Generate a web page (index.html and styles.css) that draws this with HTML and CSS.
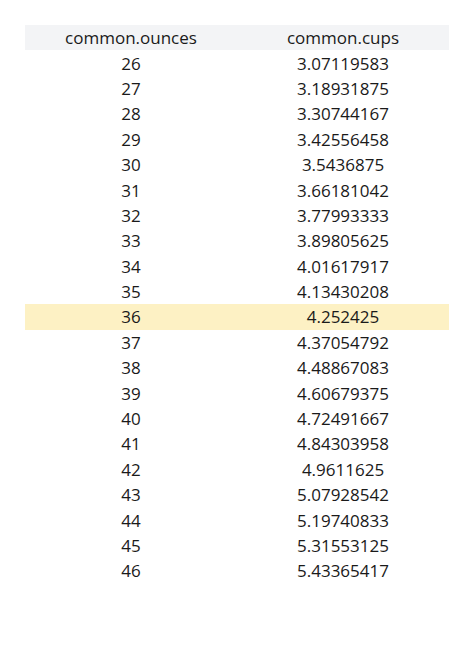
FILE: index.html
```html
<!DOCTYPE html>
<html>
<head>
<meta charset="utf-8">
<link rel="stylesheet" href="styles.css">
</head>
<body>
<table class="data">
<thead><tr><th>common.ounces</th><th>common.cups</th></tr></thead>
<tbody>
<tr><td>26</td><td>3.07119583</td></tr>
<tr><td>27</td><td>3.18931875</td></tr>
<tr><td>28</td><td>3.30744167</td></tr>
<tr><td>29</td><td>3.42556458</td></tr>
<tr><td>30</td><td>3.5436875</td></tr>
<tr><td>31</td><td>3.66181042</td></tr>
<tr><td>32</td><td>3.77993333</td></tr>
<tr><td>33</td><td>3.89805625</td></tr>
<tr><td>34</td><td>4.01617917</td></tr>
<tr><td>35</td><td>4.13430208</td></tr>
<tr class="hl"><td>36</td><td>4.252425</td></tr>
<tr><td>37</td><td>4.37054792</td></tr>
<tr><td>38</td><td>4.48867083</td></tr>
<tr><td>39</td><td>4.60679375</td></tr>
<tr><td>40</td><td>4.72491667</td></tr>
<tr><td>41</td><td>4.84303958</td></tr>
<tr><td>42</td><td>4.9611625</td></tr>
<tr><td>43</td><td>5.07928542</td></tr>
<tr><td>44</td><td>5.19740833</td></tr>
<tr><td>45</td><td>5.31553125</td></tr>
<tr><td>46</td><td>5.43365417</td></tr>
</tbody>
</table>
</body>
</html>
```
FILE: styles.css
```css
html, body { margin: 0; padding: 0; background: #fff; }
body { padding: 25px 25px 0 25px; font-family: "Open Sans", "Noto Sans", sans-serif; color: #1a1a1a; }
.data { width: 424px; border-collapse: collapse; table-layout: fixed; font-size: 17px; }
.data th, .data td { width: 50%; text-align: center; font-weight: 400; height: 25.4px; padding: 0; line-height: 23px; }
.data thead th { background: #f3f4f6; }
.data tr.hl td { background: #fdf1c4; }
```
